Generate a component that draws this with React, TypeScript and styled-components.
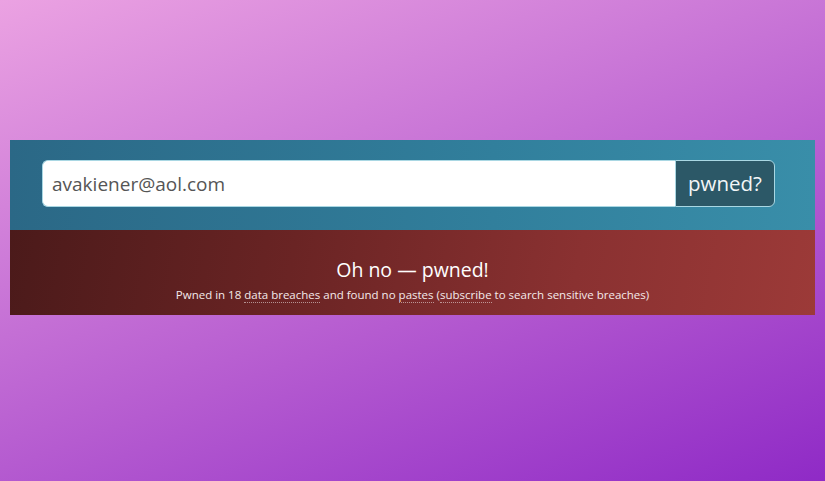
import * as React from "react";
import styled, { createGlobalStyle } from "styled-components";

const Global = createGlobalStyle`
  html, body { margin: 0; padding: 0; height: 100%; }
  body { font-family: "Open Sans", "Noto Sans", sans-serif; }
  #root { height: 100%; }
`;

const Page = styled.div`
  width: 825px;
  height: 481px;
  box-sizing: border-box;
  padding: 140px 10px 0;
  background: linear-gradient(160deg, #eba2e2 0%, #d07fd9 30%, #b55bd0 60%, #8f2ac6 100%);
  overflow: hidden;
`;

const SearchBar = styled.div`
  height: 90px;
  box-sizing: border-box;
  padding: 20px 40px 0 32px;
  background: linear-gradient(90deg, #2b6886 0%, #317f9c 60%, #398ea9 100%);
`;

const Form = styled.form`
  display: flex;
  height: 47px;
  margin: 0;
`;

const EmailInput = styled.input`
  flex: 1;
  min-width: 0;
  box-sizing: border-box;
  border: 1px solid #a9d7e3;
  border-right: none;
  border-radius: 6px 0 0 6px;
  padding: 0 9px;
  font-family: "Open Sans", "Noto Sans", sans-serif;
  font-size: 19px;
  color: #555;
  background: #fff;
  outline: none;
`;

const SubmitButton = styled.button`
  width: 100px;
  box-sizing: border-box;
  border: 1px solid #a9d7e3;
  border-radius: 0 6px 6px 0;
  background: #2c5867;
  color: #f2f6f7;
  font-family: "Open Sans", "Noto Sans", sans-serif;
  font-size: 20.5px;
  padding: 0 0 2px;
  cursor: pointer;
`;

const Result = styled.div`
  height: 85px;
  box-sizing: border-box;
  padding-top: 27px;
  text-align: center;
  color: #fff;
  background: linear-gradient(100deg, #4b1a1a 0%, #6a2424 35%, #8a3131 70%, #9c3a38 100%);
`;

const Title = styled.h2`
  margin: 0;
  font-size: 19.5px;
  font-weight: 400;
  line-height: 26px;
`;

const Summary = styled.p`
  margin: 3px 0 0;
  font-size: 11.5px;
  line-height: 17px;
  color: #f4eaea;
`;

const Dotted = styled.a`
  color: inherit;
  text-decoration: none;
  border-bottom: 1px dotted rgba(255, 255, 255, 0.5);
`;

export default function App() {
  return (
    <>
      <Global />
      <Page>
        <SearchBar>
          <Form onSubmit={(e) => e.preventDefault()}>
            <EmailInput type="email" defaultValue="avakiener@aol.com" />
            <SubmitButton type="submit">pwned?</SubmitButton>
          </Form>
        </SearchBar>
        <Result>
          <Title>Oh no — pwned!</Title>
          <Summary>
            Pwned in 18 <Dotted href="#">data breaches</Dotted> and found no{" "}
            <Dotted href="#">pastes</Dotted> (<Dotted href="#">subscribe</Dotted> to search sensitive breaches)
          </Summary>
        </Result>
      </Page>
    </>
  );
}
